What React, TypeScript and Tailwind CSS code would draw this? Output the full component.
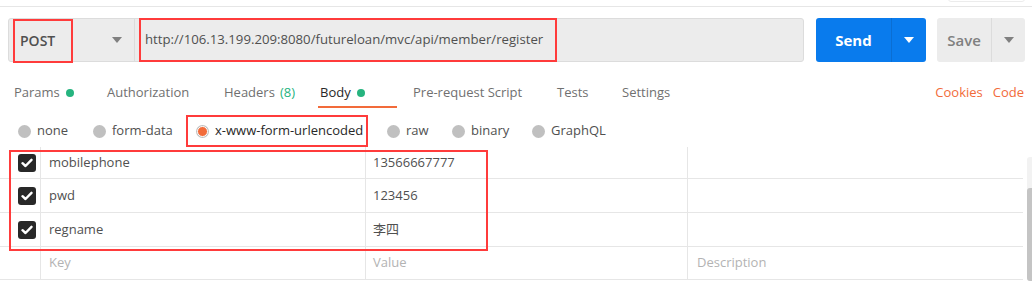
import React from 'react';

const FONT = { fontFamily: '"Open Sans", "Noto Sans CJK SC", sans-serif' };

const tabs = [
  { label: 'Params', width: 'w-[93px]', dot: true },
  { label: 'Authorization', width: 'w-[117px]' },
  { label: 'Headers', width: 'w-[96px]', count: '(8)' },
  { label: 'Body', width: 'w-[93px]', dot: true, active: true },
  { label: 'Pre-request Script', width: 'w-[144px]' },
  { label: 'Tests', width: 'w-[65px]' },
  { label: 'Settings', width: 'w-[80px]' },
];

const bodyTypes = [
  { label: 'none', width: 'w-[75px]' },
  { label: 'form-data', width: 'w-[103px]' },
  { label: 'x-www-form-urlencoded', width: 'w-[191px]', checked: true },
  { label: 'raw', width: 'w-[65px]' },
  { label: 'binary', width: 'w-[80px]' },
  { label: 'GraphQL', width: 'w-[90px]' },
];

const params = [
  { key: 'mobilephone', value: '13566667777', h: 'h-[32px]' },
  { key: 'pwd', value: '123456', h: 'h-[34px]' },
  { key: 'regname', value: '李四', h: 'h-[34px]' },
];

function Caret({ className }: { className: string }) {
  return (
    <svg width="10" height="6" viewBox="0 0 10 6" className={className}>
      <path d="M0 0h10L5 6z" fill="currentColor" />
    </svg>
  );
}

function Checkbox() {
  return (
    <div className="w-[18px] h-[18px] rounded-[3px] bg-[#282828] flex items-center justify-center">
      <svg width="12" height="10" viewBox="0 0 12 10">
        <path d="M1.5 5.2 4.5 8 10.5 1.8" fill="none" stroke="#fff" strokeWidth="2.4" strokeLinecap="round" strokeLinejoin="round" />
      </svg>
    </div>
  );
}

export default function App() {
  return (
    <div className="relative w-[1032px] h-[285px] bg-white overflow-hidden text-[13px] text-[#505050]" style={FONT}>
      {/* top strip */}
      <div className="relative h-[7px] border-b border-[#e6e6e6]">
        <div className="absolute left-[948px] top-[-20px] w-[77px] h-[22px] rounded-[3px] border border-[#ececec]" />
      </div>

      {/* request bar */}
      <div className="flex items-stretch h-[44px] mt-[11px] pl-[8px]">
        <div className="flex w-[796px] rounded-[3px] border border-[#dcdcdc] bg-[#ececec]">
          <div className="w-[126px] flex items-center justify-between pl-[11px] pr-[12px] border-r border-[#dcdcdc]">
            <span className="text-[14px] font-semibold text-[#505050]">POST</span>
            <Caret className="text-[#808080]" />
          </div>
          <div className="flex-1 flex items-center pl-[10px] text-[13.2px] text-[#505050]">
            http://106.13.199.209:8080/futureloan/mvc/api/member/register
          </div>
        </div>
        <div className="ml-[12px] w-[110px] flex rounded-[3px] bg-[#097bed] text-white">
          <div className="w-[76px] flex items-center justify-center text-[15px] font-bold border-r border-[#0a6ed3]">Send</div>
          <div className="flex-1 flex items-center justify-center">
            <Caret className="text-white" />
          </div>
        </div>
        <div className="ml-[11px] w-[88px] flex rounded-[3px] bg-[#ececec] text-[#808080]">
          <div className="w-[55px] flex items-center justify-center text-[15px] font-semibold border-r border-[#dcdcdc]">Save</div>
          <div className="flex-1 flex items-center justify-center">
            <Caret className="text-[#808080]" />
          </div>
        </div>
      </div>

      {/* tabs */}
      <div className="flex items-stretch h-[47px] pl-[14px] pr-[8px]">
        {tabs.map((t) => (
          <div key={t.label} className={`relative ${t.width} flex items-center pt-[17px] pb-[2px]`}>
            <span className={t.active ? 'text-[#282828]' : 'text-[#707070]'}>{t.label}</span>
            {t.count && <span className="ml-[5px] text-[#26b47f]">{t.count}</span>}
            {t.dot && <span className="ml-[6px] w-[8px] h-[8px] rounded-full bg-[#26b47f]" />}
            {t.active && <div className="absolute left-[-2px] bottom-[1px] w-[79px] h-[2px] bg-[#f26b3a]" />}
          </div>
        ))}
        <div className="ml-auto flex items-center gap-[10px] pt-[17px] pb-[2px] text-[#f26b3a]">
          <span>Cookies</span>
          <span>Code</span>
        </div>
      </div>

      {/* body types */}
      <div className="flex items-center h-[38px] pl-[18px] pt-[6px]">
        {bodyTypes.map((b) => (
          <div key={b.label} className={`${b.width} flex items-center gap-[6px]`}>
            {b.checked ? (
              <span className="w-[13px] h-[13px] rounded-full bg-[#c0c0c0] flex items-center justify-center">
                <span className="w-[9px] h-[9px] rounded-full bg-[#f26b3a] border border-white box-content" />
              </span>
            ) : (
              <span className="w-[13px] h-[13px] rounded-full bg-[#c0c0c0]" />
            )}
            <span className={b.checked ? 'text-[#282828]' : 'text-[#505050]'}>{b.label}</span>
          </div>
        ))}
      </div>

      {/* params table */}
      <div className="flex">
        <div className="w-[1023px]">
          {params.map((p) => (
            <div key={p.key} className={`flex ${p.h} border-b border-[#e6e6e6]`}>
              <div className="w-[41px] flex items-center pl-[18px] border-r border-[#e6e6e6]">
                <Checkbox />
              </div>
              <div className="w-[325px] flex items-center pl-[8px] border-r border-[#e6e6e6]">{p.key}</div>
              <div className="w-[322px] flex items-center pl-[7px] border-r border-[#e6e6e6]">{p.value}</div>
              <div className="flex-1" />
            </div>
          ))}
          <div className="flex h-[33px] border-b border-[#e6e6e6] text-[#b3b3b3]">
            <div className="w-[41px] border-r border-[#e6e6e6]" />
            <div className="w-[325px] flex items-center pl-[8px] border-r border-[#e6e6e6]">Key</div>
            <div className="w-[322px] flex items-center pl-[7px] border-r border-[#e6e6e6]">Value</div>
            <div className="flex-1 flex items-center pl-[9px]">Description</div>
          </div>
        </div>
        <div className="ml-[4px] w-[5px] mt-[10px] h-[124px] rounded-l-[3px] bg-[#f2f2f2] flex flex-col justify-end">
          <div className="h-[93px] rounded-l-[3px] bg-[#c4c4c4]" />
        </div>
      </div>

      {/* red annotation boxes */}
      <div className="absolute left-[13px] top-[19px] w-[60px] h-[44px] border-[2.5px] border-[#ff3b3b]" />
      <div className="absolute left-[139px] top-[18px] w-[418px] h-[44px] border-[2.5px] border-[#ff3b3b]" />
      <div className="absolute left-[186px] top-[115px] w-[182px] h-[32px] border-[2.5px] border-[#ff3b3b]" />
      <div className="absolute left-[9px] top-[150px] w-[479px] h-[101px] border-[2.5px] border-[#ff3b3b]" />
    </div>
  );
}
